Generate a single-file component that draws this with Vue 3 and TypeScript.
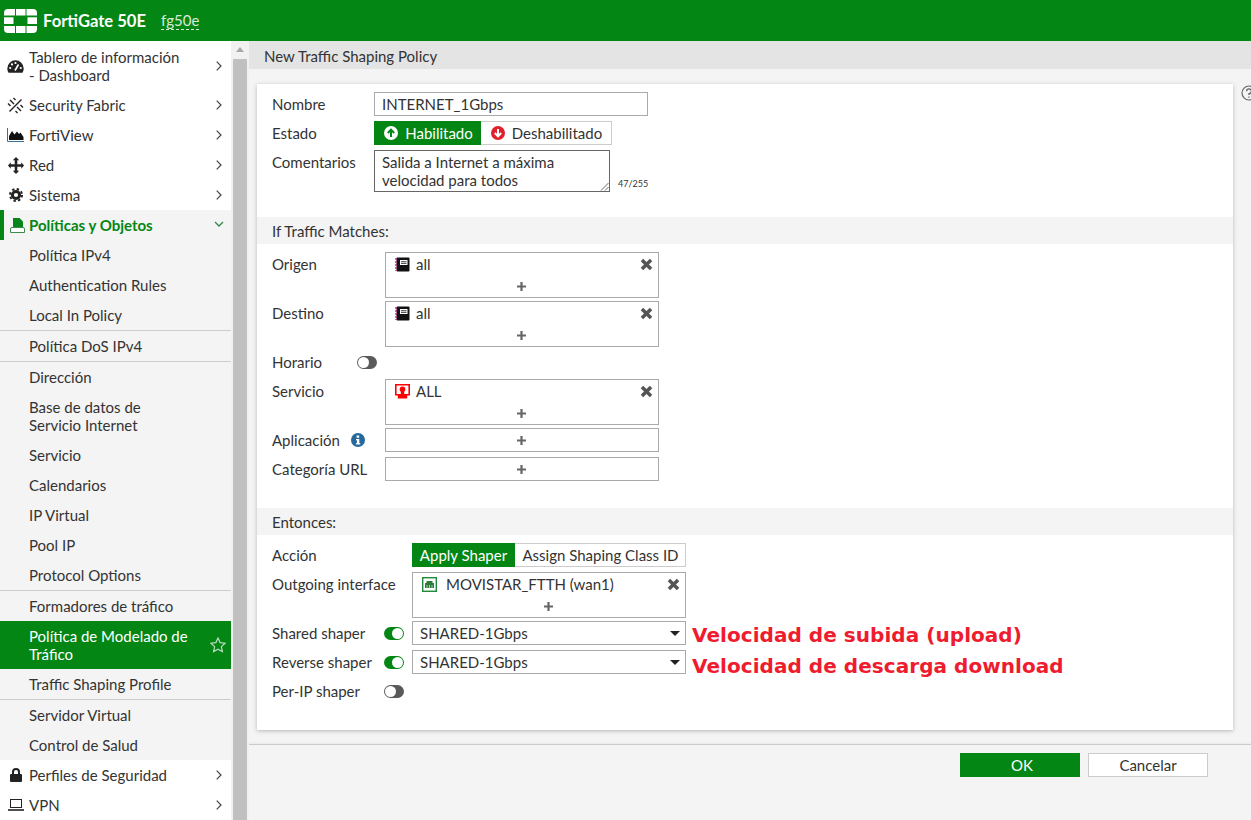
<script setup lang="ts">
type Item = { lines: string[]; icon?: string; kind: 'top' | 'open' | 'sub' | 'active'; sep?: boolean }

const nav: Item[] = [
  { lines: ['Tablero de información', '- Dashboard'], icon: 'gauge', kind: 'top' },
  { lines: ['Security Fabric'], icon: 'fabric', kind: 'top' },
  { lines: ['FortiView'], icon: 'view', kind: 'top' },
  { lines: ['Red'], icon: 'move', kind: 'top' },
  { lines: ['Sistema'], icon: 'gear', kind: 'top' },
  { lines: ['Políticas y Objetos'], icon: 'policy', kind: 'open' },
  { lines: ['Política IPv4'], kind: 'sub' },
  { lines: ['Authentication Rules'], kind: 'sub' },
  { lines: ['Local In Policy'], kind: 'sub', sep: true },
  { lines: ['Política DoS IPv4'], kind: 'sub', sep: true },
  { lines: ['Dirección'], kind: 'sub' },
  { lines: ['Base de datos de', 'Servicio Internet'], kind: 'sub' },
  { lines: ['Servicio'], kind: 'sub' },
  { lines: ['Calendarios'], kind: 'sub' },
  { lines: ['IP Virtual'], kind: 'sub' },
  { lines: ['Pool IP'], kind: 'sub' },
  { lines: ['Protocol Options'], kind: 'sub', sep: true },
  { lines: ['Formadores de tráfico'], kind: 'sub' },
  { lines: ['Política de Modelado de', 'Tráfico'], kind: 'active' },
  { lines: ['Traffic Shaping Profile'], kind: 'sub', sep: true },
  { lines: ['Servidor Virtual'], kind: 'sub' },
  { lines: ['Control de Salud'], kind: 'sub' },
  { lines: ['Perfiles de Seguridad'], icon: 'lock', kind: 'top' },
  { lines: ['VPN'], icon: 'laptop', kind: 'top' },
]
</script>

<template>
  <div class="app">
    <header class="topbar">
      <svg class="logo" viewBox="0 0 33 24" width="33" height="24" fill="#fff">
        <path d="M4 0H11V6.5H0V4A4 4 0 0 1 4 0z" />
        <rect x="12" width="9.5" height="6.5" />
        <path d="M22.5 0H29a4 4 0 0 1 4 4v2.5H22.5z" />
        <rect y="8.3" width="9.5" height="6.7" />
        <rect x="23.5" y="8.3" width="9.5" height="6.7" />
        <path d="M0 17H11V24H4A4 4 0 0 1 0 20z" />
        <rect x="12" y="17" width="9.5" height="7" />
        <path d="M22.5 17H33v3a4 4 0 0 1-4 4H22.5z" />
      </svg>
      <span class="brand">FortiGate 50E</span>
      <span class="host">fg50e</span>
    </header>

    <div class="body">
      <aside class="side">
        <nav class="menu">
          <template v-for="item in nav" :key="item.lines[0]">
            <div class="item" :class="[item.kind, { tall: item.lines.length > 1 }]">
              <span v-if="item.icon" class="ico">
                <svg v-if="item.icon === 'gauge'" viewBox="0 0 17 13" width="17" height="13">
                  <path fill="#222" d="M8.5.3A8.2 8.2 0 0 0 .3 8.5c0 1.6.4 3 1.2 4.2h14c.8-1.2 1.2-2.6 1.2-4.2A8.2 8.2 0 0 0 8.5.3z" />
                  <g fill="#fff"><circle cx="3.2" cy="8" r="1.1" /><circle cx="5" cy="4.4" r="1.1" /><circle cx="8.5" cy="3" r="1.1" /><circle cx="13.8" cy="8" r="1.1" /></g>
                  <path d="M8 10.5L11.5 4.5" stroke="#fff" stroke-width="1.6" />
                </svg>
                <svg v-else-if="item.icon === 'fabric'" viewBox="0 0 17 17" width="17" height="17" fill="none" stroke="#222" stroke-width="1.4">
                  <path d="M3 3l4 4M10 10l4 4M14.5 2.5L2.5 14.5M1 6.5l2.5 2.5M13.5 8l2.5 2.5M6.5 1l2 2M8.5 14l2 2" />
                </svg>
                <svg v-else-if="item.icon === 'view'" viewBox="0 0 17 14" width="17" height="14">
                  <path d="M.5 0v13.5H17" fill="none" stroke="#3c6f96" />
                  <path fill="#111" d="M2 12V8l3-5 2.5 3.5L10 3.5l2 2.5 1.5-1.5L16.5 9v3z" />
                </svg>
                <svg v-else-if="item.icon === 'move'" viewBox="0 0 16 17" width="16" height="17" fill="#222">
                  <path d="M8 0l3.2 3.2H9.3v4h4V5.3L16 8.5l-2.7 3.2V9.8h-4v4h1.9L8 17l-3.2-3.2h1.9v-4h-4v1.9L0 8.5l2.7-3.2v1.9h4v-4H4.8z" />
                </svg>
                <svg v-else-if="item.icon === 'gear'" viewBox="0 0 14 14" width="14" height="14" fill="none" stroke="#222">
                  <circle cx="7" cy="7" r="3.6" stroke-width="3" />
                  <circle cx="7" cy="7" r="6" stroke-width="2" stroke-dasharray="2.4 2.31" />
                </svg>
                <svg v-else-if="item.icon === 'policy'" viewBox="0 0 15 15" width="15" height="15">
                  <path d="M2 9.5A1.5 1.5 0 0 0 .5 11v3.5h14V11A1.5 1.5 0 0 0 13 9.5z" fill="#fff" stroke="#3d8a4c" />
                  <path d="M3 0h6.5L13 3.5V9H3z" fill="#04861a" />
                </svg>
                <svg v-else-if="item.icon === 'lock'" viewBox="0 0 12 14" width="12" height="14">
                  <path fill="#222" d="M2 6V4a4 4 0 0 1 8 0v2h1a1 1 0 0 1 1 1v6a1 1 0 0 1-1 1H1a1 1 0 0 1-1-1V7a1 1 0 0 1 1-1zm2 0h4V4a2 2 0 0 0-4 0z" />
                </svg>
                <svg v-else viewBox="0 0 16 12" width="16" height="12" fill="none" stroke="#222">
                  <rect x="2.5" y=".5" width="11" height="8" />
                  <path d="M0 11h16" stroke-width="1.6" />
                </svg>
              </span>
              <span class="txt"><span v-for="l in item.lines" :key="l" class="ln">{{ l }}</span></span>
              <svg v-if="item.kind === 'top'" class="chev" viewBox="0 0 6 10" width="6" height="10" fill="none" stroke="#444" stroke-width="1.2">
                <path d="M.7.7L5 5 .7 9.3" />
              </svg>
              <svg v-if="item.kind === 'open'" class="chev down" viewBox="0 0 10 7" width="10" height="7" fill="none" stroke="#2f8a45" stroke-width="1.3">
                <path d="M1 1l4 4 4-4" />
              </svg>
              <svg v-if="item.kind === 'active'" class="star" viewBox="0 0 16 16" width="16" height="16" fill="none" stroke="#b9dcc0" stroke-width="1.2">
                <path d="M8 1l2.1 4.6 5 .6-3.7 3.4 1 4.9L8 12.1l-4.4 2.4 1-4.9L.9 6.2l5-.6z" />
              </svg>
            </div>
            <div v-if="item.sep" class="sep"></div>
          </template>
        </nav>
        <div class="scroll">
          <span class="arrow"></span>
          <span class="thumb"></span>
        </div>
      </aside>

      <main class="main">
        <div class="title">New Traffic Shaping Policy</div>
        <div class="content">
          <div class="card">
            <section class="sec first">
              <div class="row">
                <label class="lab">Nombre</label>
                <div class="input name">INTERNET_1Gbps</div>
              </div>
              <div class="row">
                <label class="lab">Estado</label>
                <div class="seg">
                  <span class="on state">
                    <svg viewBox="0 0 14 14" width="14" height="14">
                      <circle cx="7" cy="7" r="7" fill="#fff" />
                      <path d="M7 11V4M3.8 7L7 3.6 10.2 7" fill="none" stroke="#04861a" stroke-width="2" />
                    </svg>
                    Habilitado
                  </span>
                  <span class="off state">
                    <svg viewBox="0 0 14 14" width="14" height="14">
                      <circle cx="7" cy="7" r="7" fill="#e0202c" />
                      <path d="M7 3v7M3.8 7L7 10.4 10.2 7" fill="none" stroke="#fff" stroke-width="2" />
                    </svg>
                    Deshabilitado
                  </span>
                </div>
              </div>
              <div class="row">
                <label class="lab top">Comentarios</label>
                <div class="area">
                  Salida a Internet a máxima<br />velocidad para todos
                  <svg class="grip" viewBox="0 0 9 9" width="9" height="9" stroke="#666" fill="none">
                    <path d="M1 8.5L8.5 1M5 8.5L8.5 5" />
                  </svg>
                </div>
                <span class="count">47/255</span>
              </div>
            </section>

            <div class="band">If Traffic Matches:</div>

            <section class="sec second">
              <div class="row tight">
                <label class="lab top">Origen</label>
                <div class="box">
                  <div class="tag">
                    <svg viewBox="0 0 15 15" width="15" height="15">
                      <rect x="1.5" y="0.5" width="13" height="14" rx="1" fill="#111" />
                      <path d="M1 1v13" stroke="#c0209a" stroke-width="1.4" stroke-dasharray="2 1" />
                      <path d="M5 3h7.5v5H5z" fill="#fff" />
                      <path d="M6 4.7h5.5M6 6.4h5.5" stroke="#111" stroke-width=".8" />
                    </svg>
                    <span class="tag-t">all</span>
                    <svg class="x" viewBox="0 0 12 12" width="13" height="13"><path d="M1.8 1.8l8.4 8.4M10.2 1.8l-8.4 8.4" stroke="#555" stroke-width="3.2" /></svg>
                  </div>
                  <div class="plus"><svg viewBox="0 0 9 9" width="9" height="9"><path d="M4.5 0v9M0 4.5h9" stroke="#666" stroke-width="2.2" /></svg></div>
                </div>
              </div>
              <div class="row tight">
                <label class="lab top">Destino</label>
                <div class="box">
                  <div class="tag">
                    <svg viewBox="0 0 15 15" width="15" height="15">
                      <rect x="1.5" y="0.5" width="13" height="14" rx="1" fill="#111" />
                      <path d="M1 1v13" stroke="#c0209a" stroke-width="1.4" stroke-dasharray="2 1" />
                      <path d="M5 3h7.5v5H5z" fill="#fff" />
                      <path d="M6 4.7h5.5M6 6.4h5.5" stroke="#111" stroke-width=".8" />
                    </svg>
                    <span class="tag-t">all</span>
                    <svg class="x" viewBox="0 0 12 12" width="13" height="13"><path d="M1.8 1.8l8.4 8.4M10.2 1.8l-8.4 8.4" stroke="#555" stroke-width="3.2" /></svg>
                  </div>
                  <div class="plus"><svg viewBox="0 0 9 9" width="9" height="9"><path d="M4.5 0v9M0 4.5h9" stroke="#666" stroke-width="2.2" /></svg></div>
                </div>
              </div>
              <div class="row sched">
                <label class="lab short">Horario</label>
                <span class="sw"></span>
              </div>
              <div class="row tight">
                <label class="lab top">Servicio</label>
                <div class="box">
                  <div class="tag">
                    <svg viewBox="0 0 15 15" width="15" height="15">
                      <path d="M.8.8h13.4v10H.8z" fill="#fff" stroke="#f00" stroke-width="1.6" />
                      <circle cx="7.5" cy="5.2" r="2.8" fill="#f00" />
                      <path d="M5.8 7h3.4v4h3v3.5H2.8V11h3z" fill="#f00" />
                    </svg>
                    <span class="tag-t">ALL</span>
                    <svg class="x" viewBox="0 0 12 12" width="13" height="13"><path d="M1.8 1.8l8.4 8.4M10.2 1.8l-8.4 8.4" stroke="#555" stroke-width="3.2" /></svg>
                  </div>
                  <div class="plus"><svg viewBox="0 0 9 9" width="9" height="9"><path d="M4.5 0v9M0 4.5h9" stroke="#666" stroke-width="2.2" /></svg></div>
                </div>
              </div>
              <div class="row">
                <label class="lab">
                  Aplicación
                  <svg class="info" viewBox="0 0 14 14" width="14" height="14">
                    <circle cx="7" cy="7" r="7" fill="#26689c" />
                    <path d="M5.6 2.5h2.6v2.2H5.6zM5 6h3.3v4.2h1v1.3H4.9v-1.3h1V7.3H5z" fill="#fff" />
                  </svg>
                </label>
                <div class="box single"><div class="plus"><svg viewBox="0 0 9 9" width="9" height="9"><path d="M4.5 0v9M0 4.5h9" stroke="#666" stroke-width="2.2" /></svg></div></div>
              </div>
              <div class="row">
                <label class="lab">Categoría URL</label>
                <div class="box single"><div class="plus"><svg viewBox="0 0 9 9" width="9" height="9"><path d="M4.5 0v9M0 4.5h9" stroke="#666" stroke-width="2.2" /></svg></div></div>
              </div>
            </section>

            <div class="band">Entonces:</div>

            <section class="sec third">
              <div class="row">
                <label class="lab">Acción</label>
                <div class="seg wide">
                  <span class="on act">Apply Shaper</span>
                  <span class="off act">Assign Shaping Class ID</span>
                </div>
              </div>
              <div class="row tight">
                <label class="lab top">Outgoing interface</label>
                <div class="box wide">
                  <div class="tag">
                    <svg viewBox="0 0 15 15" width="15" height="15">
                      <rect x=".7" y=".7" width="13.6" height="13.6" fill="#fff" stroke="#1f8a3a" stroke-width="1.4" />
                      <path d="M3 11V6h1.5V4h6v2H12v5z" fill="#2c7a3c" />
                      <path d="M5 8v3M7.5 8v3M10 8v3" stroke="#bfe3c6" stroke-width=".8" />
                    </svg>
                    <span class="tag-t far">MOVISTAR_FTTH (wan1)</span>
                    <svg class="x" viewBox="0 0 12 12" width="13" height="13"><path d="M1.8 1.8l8.4 8.4M10.2 1.8l-8.4 8.4" stroke="#555" stroke-width="3.2" /></svg>
                  </div>
                  <div class="plus"><svg viewBox="0 0 9 9" width="9" height="9"><path d="M4.5 0v9M0 4.5h9" stroke="#666" stroke-width="2.2" /></svg></div>
                </div>
              </div>
              <div class="row">
                <label class="lab shaper">Shared shaper</label>
                <span class="sw green"></span>
                <div class="select">SHARED-1Gbps<span class="caret"></span></div>
                <span class="note up">Velocidad de subida (upload)</span>
              </div>
              <div class="row">
                <label class="lab shaper">Reverse shaper</label>
                <span class="sw green"></span>
                <div class="select">SHARED-1Gbps<span class="caret"></span></div>
                <span class="note dn">Velocidad de descarga download</span>
              </div>
              <div class="row">
                <label class="lab shaper">Per-IP shaper</label>
                <span class="sw"></span>
              </div>
            </section>
          </div>
          <svg class="help" viewBox="0 0 16 16" width="16" height="16" fill="none">
            <circle cx="8" cy="8" r="7" stroke="#666" stroke-width="1.2" />
            <path d="M5.6 6.2A2.4 2.4 0 1 1 8 8.6v1.4M8 11.4v1.4" stroke="#666" stroke-width="1.3" />
          </svg>
        </div>
        <footer class="foot">
          <button class="btn ok">OK</button>
          <button class="btn cancel">Cancelar</button>
        </footer>
      </main>
    </div>
  </div>
</template>

<style scoped>
.app {
  width: 1251px;
  height: 820px;
  overflow: hidden;
  display: flex;
  flex-direction: column;
  font-family: Lato, "Liberation Sans", sans-serif;
  font-size: 15px;
  color: #333;
  background: #fff;
}
.topbar {
  height: 41px;
  flex: none;
  background: #048614;
  display: flex;
  align-items: center;
  padding-left: 4px;
  box-sizing: border-box;
}
.logo { flex: none; margin-top: 1px; }
.brand {
  margin-left: 6px;
  color: #fff;
  font-weight: 700;
  font-size: 16.6px;
}
.host {
  margin-left: 15px;
  color: #d7ead9;
  font-size: 15px;
  border-bottom: 1px dashed #d7ead9;
  line-height: 17px;
}
.body { flex: 1; display: flex; min-height: 0; }
.side { width: 249px; flex: none; display: flex; overflow: hidden; }
.menu { width: 231px; flex: none; background: #fff; padding-top: 1px; }
.item {
  height: 30px;
  display: flex;
  align-items: center;
  position: relative;
  padding-left: 29px;
  box-sizing: border-box;
  line-height: 18px;
}
.item.tall { height: 48px; }
.ln { display: block; white-space: nowrap; }
.sub { background: #f4f4f4; }
.open { background: #f4f4f4; color: #048614; font-weight: 700; border-left: 4px solid #048614; padding-left: 25px; }
.active { background: #048614; color: #fff; }
.ico {
  position: absolute;
  left: 7px;
  top: 0;
  bottom: 0;
  width: 17px;
  display: flex;
  align-items: center;
  justify-content: center;
}
.open .ico { left: 5px; }
.chev { position: absolute; left: 216px; top: 50%; margin-top: -5px; }
.chev.down { left: 210px; margin-top: -4px; }
.star { position: absolute; left: 210px; top: 16px; }
.sep { height: 1px; background: #ccc; }
.scroll { width: 18px; flex: none; background: #f1f1f1; position: relative; display: flex; flex-direction: column; align-items: center; }
.arrow {
  margin-top: 6px;
  width: 0;
  height: 0;
  border: 4px solid transparent;
  border-top: 0;
  border-bottom: 5px solid #a8a8a8;
}
.thumb { margin-top: 7px; width: 14px; flex: 1; background: #c0c0c0; }
.main { flex: 1; min-width: 0; display: flex; flex-direction: column; background: #f4f4f4; }
.title {
  height: 28px;
  flex: none;
  background: #e4e4e4;
  display: flex;
  align-items: center;
  padding: 1px 0 0 15px;
  box-sizing: border-box;
}
.content {
  flex: 1;
  padding: 15px 18px 0 8px;
  position: relative;
  min-height: 0;
}
.help { position: absolute; right: -6px; top: 16px; }
.card {
  height: 646px;
  background: #fff;
  box-shadow: 0 1px 4px rgba(0, 0, 0, 0.25);
}
.sec { padding-left: 15px; }
.first { padding-top: 8px; padding-bottom: 20px; }
.second, .third { padding-top: 8px; }
.second { padding-bottom: 22px; }
.band {
  height: 27px;
  background: #f4f4f4;
  display: flex;
  align-items: center;
  padding-left: 15px;
}
.row { display: flex; align-items: center; margin-bottom: 5px; min-height: 24px; }
.row.tight { margin-bottom: 3px; align-items: flex-start; }
.lab { flex: none; display: flex; align-items: center; }
.lab.top { align-self: flex-start; line-height: 24px; }
.first .lab { width: 102px; }
.second .lab { width: 113px; }
.third .lab { width: 140px; }
.third .lab.shaper { width: 112px; }
.second .lab.short { width: 85px; }
.sched { height: 24px; margin: 0 0 5px; }
.input, .box, .select {
  border: 1px solid #aaa;
  box-sizing: border-box;
  background: #fff;
}
.input { width: 274px; height: 24px; padding-left: 7px; line-height: 22px; }
.seg { display: flex; height: 24px; }
.state, .act {
  display: flex;
  align-items: center;
  justify-content: center;
  box-sizing: border-box;
}
.state { gap: 7px; }
.state.on { width: 107px; padding-left: 2px; }
.state.off { width: 131px; padding-left: 1px; }
.on { background: #048614; color: #fff; }
.off { border: 1px solid #ccc; border-left: 0; }
.act.on { width: 103px; }
.act.off { width: 171px; padding-left: 1px; }
.area {
  width: 236px;
  height: 42px;
  border: 1px solid #666;
  box-sizing: border-box;
  padding: 2px 7px;
  line-height: 18px;
  position: relative;
}
.grip { position: absolute; right: 0; bottom: 0; }
.count { align-self: flex-end; margin: 0 0 2px 8px; font-size: 9px; line-height: 12px; }
.box { width: 274px; height: 46px; display: flex; flex-direction: column; }
.box.single { height: 24px; justify-content: center; }
.tag {
  height: 22px;
  flex: none;
  display: flex;
  align-items: center;
  padding: 0 5px 0 9px;
}
.tag-t { margin-left: 6px; flex: 1; }
.tag-t.far { margin-left: 9px; }
.x { flex: none; }
.plus { display: flex; justify-content: center; align-items: center; height: 20px; margin-top: 1px; padding-right: 1px; }
.single .plus { height: 22px; margin-top: 0; }
.info { margin-left: 11px; }
.sw {
  flex: none;
  width: 20px;
  height: 13px;
  border-radius: 7px;
  background: #5a5a5a;
  position: relative;
  display: block;
}
.sw::after {
  content: "";
  position: absolute;
  left: 1px;
  top: 1px;
  width: 11px;
  height: 11px;
  border-radius: 50%;
  background: #fff;
}
.sw.green { background: #048614; }
.sw.green::after { left: 8px; }
.select {
  width: 274px;
  height: 24px;
  margin-left: 8px;
  padding-left: 7px;
  line-height: 22px;
  position: relative;
}
.caret {
  position: absolute;
  right: 5px;
  top: 9px;
  width: 0;
  height: 0;
  border: 5px solid transparent;
  border-bottom: 0;
  border-top: 5px solid #222;
}
.note {
  margin-left: 6px;
  height: 24px;
  line-height: 24px;
  color: #ee1c2e;
  font-family: "DejaVu Sans", sans-serif;
  font-weight: 700;
  font-size: 20px;
  letter-spacing: 0.05px;
  white-space: nowrap;
}
.note.up { transform: translateY(2px); }
.note.dn { transform: translateY(4px); }
.foot {
  height: 76px;
  flex: none;
  box-sizing: border-box;
  border-top: 1px solid #ccc;
  box-shadow: 0 -1px 2px rgba(0, 0, 0, 0.05);
  padding: 8px 43px 0 0;
  display: flex;
  justify-content: flex-end;
  align-items: flex-start;
  gap: 8px;
}
.btn {
  width: 120px;
  height: 24px;
  font: inherit;
  color: #333;
  padding: 0;
  box-sizing: border-box;
}
.ok { background: #048614; color: #fff; border: 0; padding: 0 0 1px 4px; }
.cancel { background: #fff; border: 1px solid #ccc; padding-bottom: 1px; }
</style>

<style>
html, body { margin: 0; overflow: hidden; }
</style>
